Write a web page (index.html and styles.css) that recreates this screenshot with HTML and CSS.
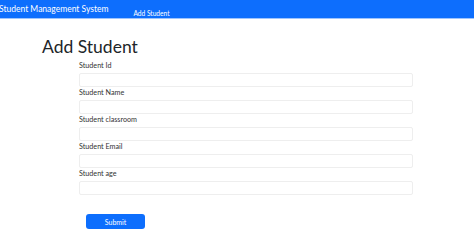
FILE: index.html
```html
<!DOCTYPE html>
<html>
<head>
  <title>Add Student</title>
  <link rel="stylesheet" href="styles.css">
</head>
<body>
  <!-- Top navigation -->
  <header class="navbar">
    <a class="brand" href="#">Student Management System</a>
    <nav>
      <a class="nav-link" href="#">Add Student</a>
    </nav>
  </header>

  <div class="container">
    <h1>Add Student</h1>

    <form class="student-form">
      <div class="field">
        <label for="studentId">Student Id</label>
        <input id="studentId" class="form-input" type="text">
      </div>
      <div class="field">
        <label for="studentName">Student Name</label>
        <input id="studentName" class="form-input" type="text">
      </div>
      <div class="field">
        <label for="studentClass">Student classroom</label>
        <input id="studentClass" class="form-input" type="text">
      </div>
      <div class="field">
        <label for="studentEmail">Student Email</label>
        <input id="studentEmail" class="form-input" type="text">
      </div>
      <div class="field">
        <label for="studentAge">Student age</label>
        <input id="studentAge" class="form-input" type="text">
      </div>

      <button type="submit" class="submit-btn">Submit</button>
    </form>
  </div>
</body>
</html>
```

FILE: styles.css
```css
* {
  box-sizing: border-box;
  margin: 0;
  padding: 0;
  font-family: Lato, "Open Sans", sans-serif;
}

body {
  background-color: white;
  color: #212529;
}

/* Navigation bar */
.navbar {
  display: flex;
  align-items: center;
  height: 19px;
  background-color: #0d6efd;
  border-bottom: 1px solid #9ec5fe;
}

.brand {
  color: white;
  text-decoration: none;
  font-size: 8.5px;
  margin-left: -1px;
  margin-right: 25px;
}

.nav-link {
  color: white;
  text-decoration: none;
  font-size: 6.6px;
}

/* Page content */
.container {
  padding-left: 42px;
}

h1 {
  font-weight: 400;
  font-size: 17.5px;
  margin-top: 16px;
  line-height: 24px;
  margin-bottom: 2px;
}

.student-form {
  margin-left: 37px;
  width: 334px;
}

.field {
  margin-bottom: 1px;
}

label {
  display: block;
  font-size: 7.2px;
  line-height: 10px;
  margin-bottom: 2px;
  color: #333;
}

.form-input {
  display: block;
  width: 100%;
  height: 14px;
  border: 1px solid #eeeeee;
  border-radius: 2px;
  background-color: white;
}

.submit-btn {
  margin-top: 18px;
  margin-left: 7px;
  width: 59px;
  height: 15px;
  background-color: #0d6efd;
  color: white;
  border: none;
  border-radius: 3px;
  font-size: 7px;
  cursor: pointer;
}
```
